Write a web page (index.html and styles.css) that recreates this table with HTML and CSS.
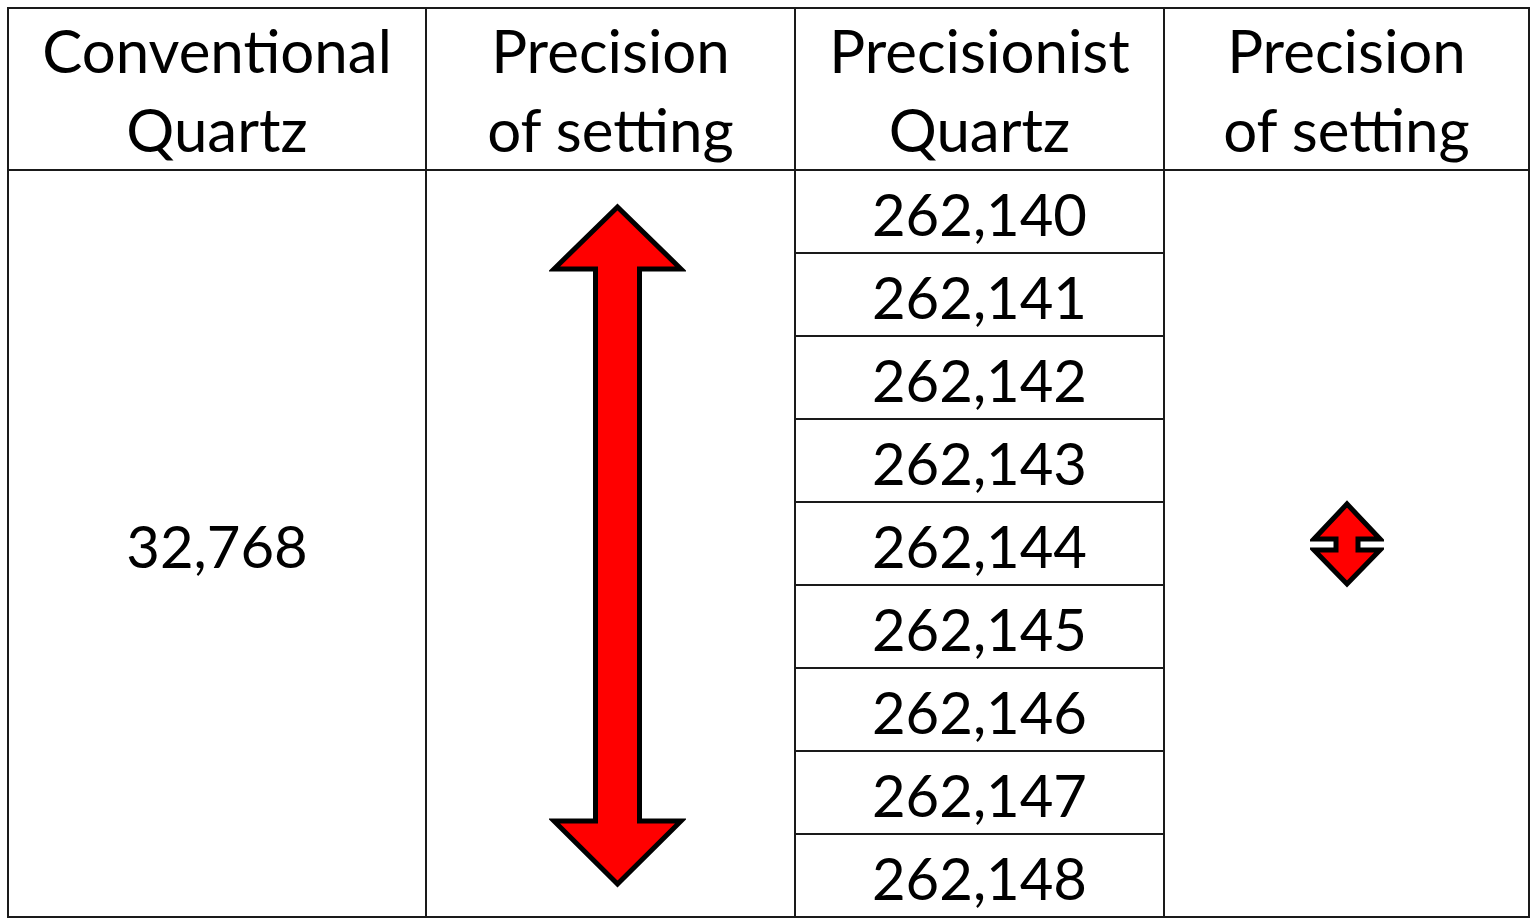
FILE: index.html
```html
<!DOCTYPE html>
<html lang="en">
<head>
<meta charset="utf-8">
<title>Quartz precision</title>
<link rel="stylesheet" href="styles.css">
</head>
<body>
<table class="grid">
  <colgroup>
    <col class="c1"><col class="c2"><col class="c3"><col class="c4">
  </colgroup>
  <thead>
    <tr class="head">
      <th>Conventional<br>Quartz</th>
      <th>Precision<br>of setting</th>
      <th>Precisionist<br>Quartz</th>
      <th>Precision<br>of setting</th>
    </tr>
  </thead>
  <tbody>
    <tr>
      <td rowspan="9" class="big">32,768</td>
      <td rowspan="9" class="arrowcell shift">
        <svg class="arrow-big" width="137" height="685" viewBox="0 0 137 685">
          <polygon points="68.5,4 132,66 90.5,66 90.5,618 132,618 68.5,681 5,618 46.5,618 46.5,66 5,66" fill="#ff0000" stroke="#000" stroke-width="5" stroke-linejoin="miter"/>
        </svg>
      </td>
      <td class="num">262,140</td>
      <td rowspan="9" class="arrowcell">
        <svg class="arrow-small" width="74" height="88" viewBox="0 0 74 88">
          <polygon points="37,4 70,39 48,39 48,50 70,50 37,84 4,50 26,50 26,39 4,39" fill="#ff0000" stroke="#000" stroke-width="5" stroke-linejoin="miter"/>
        </svg>
      </td>
    </tr>
    <tr><td class="num">262,141</td></tr>
    <tr><td class="num">262,142</td></tr>
    <tr><td class="num">262,143</td></tr>
    <tr><td class="num">262,144</td></tr>
    <tr><td class="num">262,145</td></tr>
    <tr><td class="num">262,146</td></tr>
    <tr><td class="num">262,147</td></tr>
    <tr><td class="num">262,148</td></tr>
  </tbody>
</table>
</body>
</html>
```

FILE: styles.css
```css
html, body {
  margin: 0;
  padding: 0;
  background: #ffffff;
}

body {
  padding: 7px 0 0 7px;
  font-family: "Lato", "Open Sans", "Liberation Sans", sans-serif;
  color: #000;
}

.grid {
  border-collapse: collapse;
  table-layout: fixed;
  width: 1521px;
  border: 2px solid #1a1a1a;
}

.c1 { width: 418px; }
.c2 { width: 369px; }
.c3 { width: 369px; }
.c4 { width: 365px; }

.grid th,
.grid td {
  border: 2px solid #1a1a1a;
  padding: 0;
  text-align: center;
  vertical-align: middle;
  font-size: 58px;
  font-weight: 400;
}

.grid .head th {
  height: 158px;
  font-size: 60px;
  line-height: 79px;
  padding-top: 2px;
}

.grid td.num {
  height: 77px;
  line-height: 77px;
  padding-top: 4px;
}

.grid td.big {
  line-height: 1;
  padding-top: 4px;
}

.arrowcell svg {
  display: block;
  margin: 0 auto;
}

.grid td.shift {
  padding-left: 14px;
}

.arrow-big {
  position: relative;
  top: 2px;
}
```
